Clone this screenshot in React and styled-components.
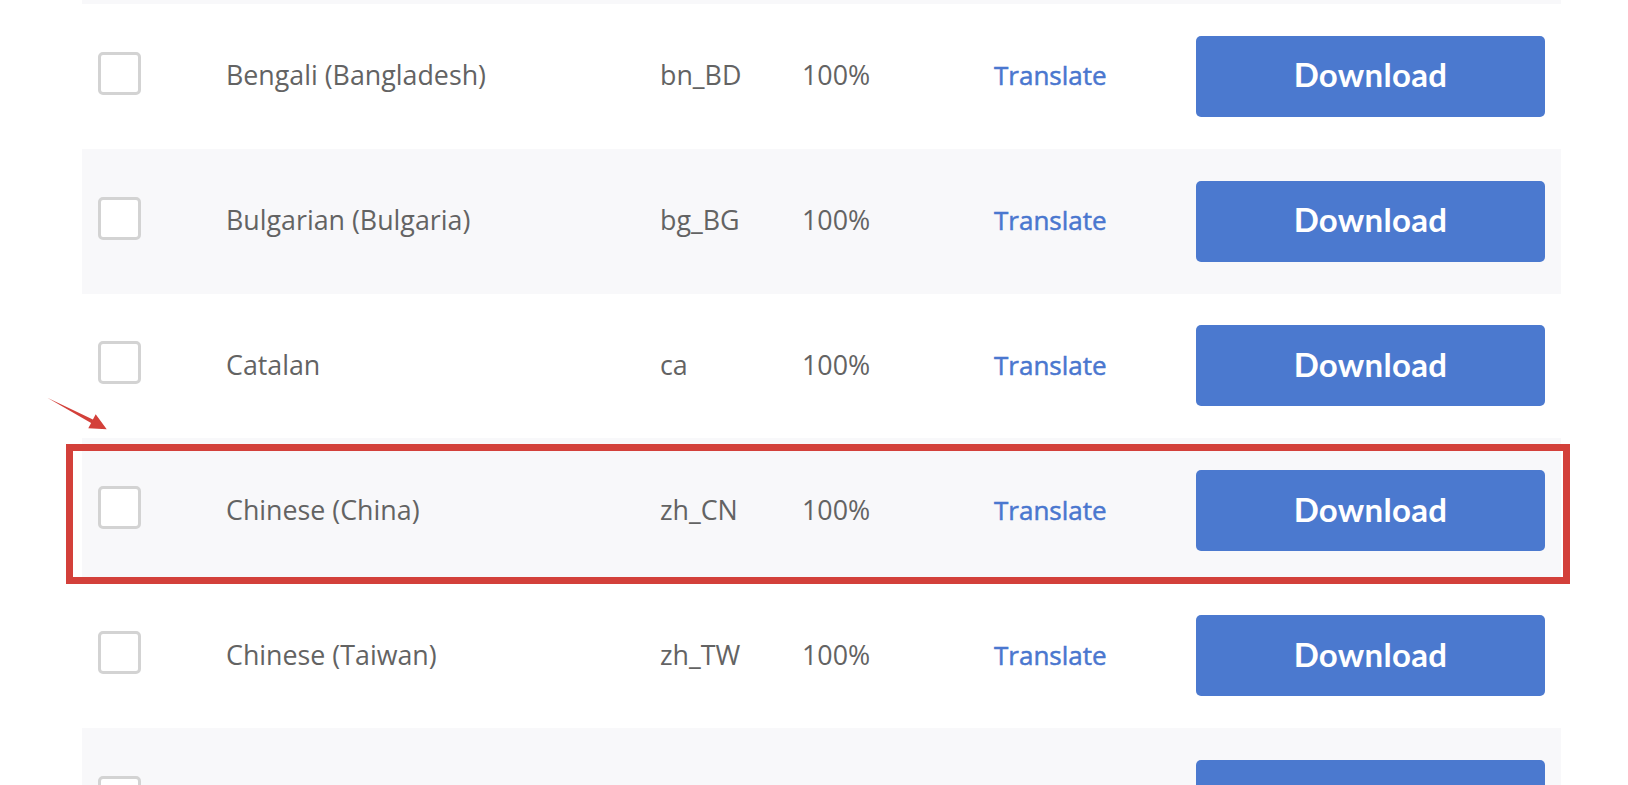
import React from 'react';
import styled, { createGlobalStyle } from 'styled-components';

const GlobalStyle = createGlobalStyle`
  html, body {
    margin: 0;
    padding: 0;
    background: #ffffff;
    overflow: hidden;
  }
  body {
    font-family: "Open Sans", Lato, "Liberation Sans", sans-serif;
  }
`;

const Page = styled.div`
  position: relative;
  width: 1628px;
  height: 785px;
  overflow: hidden;
`;

const Table = styled.div`
  margin-left: 82px;
  width: 1479px;
  display: flex;
  flex-direction: column;
`;

// bottom edge of the row above, scrolled mostly out of view
const TopEdge = styled.div`
  height: 4px;
  background: #f8f8fa;
`;

const Row = styled.div`
  display: grid;
  grid-template-columns: 128px 434px 142px 192px 202px 349px;
  align-items: center;
  height: 144.8px;
  padding: 0 16px;
  box-sizing: border-box;
  background: ${p => (p.$shaded ? '#f8f8fa' : '#ffffff')};
`;

const Check = styled.span`
  display: block;
  width: 43px;
  height: 43px;
  margin-bottom: 6px;
  box-sizing: border-box;
  border: 3.5px solid #d3d3d3;
  border-radius: 5px;
  background: #fff;
`;

const Cell = styled.span`
  font-size: 26.8px;
  line-height: 36px;
  color: #636363;
  white-space: nowrap;
  padding-bottom: 2px;
`;

const TranslateLink = styled.a`
  font-size: 26px;
  line-height: 36px;
  font-weight: 400;
  -webkit-text-stroke: 0.5px currentColor;
  color: #4a77cf;
  text-decoration: none;
  white-space: nowrap;
  padding-bottom: 2px;
`;

const DownloadButton = styled.button`
  width: 349px;
  height: 81px;
  padding: 0 0 4px;
  border: none;
  border-radius: 5px;
  background: #4b79cf;
  color: #ffffff;
  font-family: Lato, "Open Sans", sans-serif;
  font-size: 33px;
  font-weight: 700;
  letter-spacing: 0.3px;
  cursor: pointer;
`;

const Highlight = styled.div`
  position: absolute;
  left: 66px;
  top: 444px;
  width: 1504px;
  height: 140px;
  box-sizing: border-box;
  border: 7px solid #d3403a;
  pointer-events: none;
`;

const Arrow = styled.svg`
  position: absolute;
  left: 30px;
  top: 380px;
  pointer-events: none;
`;

const languages = [
  { name: 'Bengali (Bangladesh)', code: 'bn_BD' },
  { name: 'Bulgarian (Bulgaria)', code: 'bg_BG' },
  { name: 'Catalan', code: 'ca' },
  { name: 'Chinese (China)', code: 'zh_CN' },
  { name: 'Chinese (Taiwan)', code: 'zh_TW' },
  { name: 'Chinese (Hong Kong)', code: 'zh_HK' },
];

export default function App() {
  return (
    <Page>
      <GlobalStyle />
      <Table>
        <TopEdge />
        {languages.map((lang, i) => (
          <Row key={lang.code} $shaded={i % 2 === 1}>
            <Check />
            <Cell>{lang.name}</Cell>
            <Cell>{lang.code}</Cell>
            <Cell>100%</Cell>
            <TranslateLink href="#">Translate</TranslateLink>
            <DownloadButton>Download</DownloadButton>
          </Row>
        ))}
      </Table>
      <Highlight />
      <Arrow width="90" height="60" viewBox="0 0 90 60">
        <polygon
          points="17.3,17.7 62.9,39.5 65.7,34.3 76.7,49.3 58.3,48.3 61.1,43.1"
          fill="#d3403a"
        />
      </Arrow>
    </Page>
  );
}
